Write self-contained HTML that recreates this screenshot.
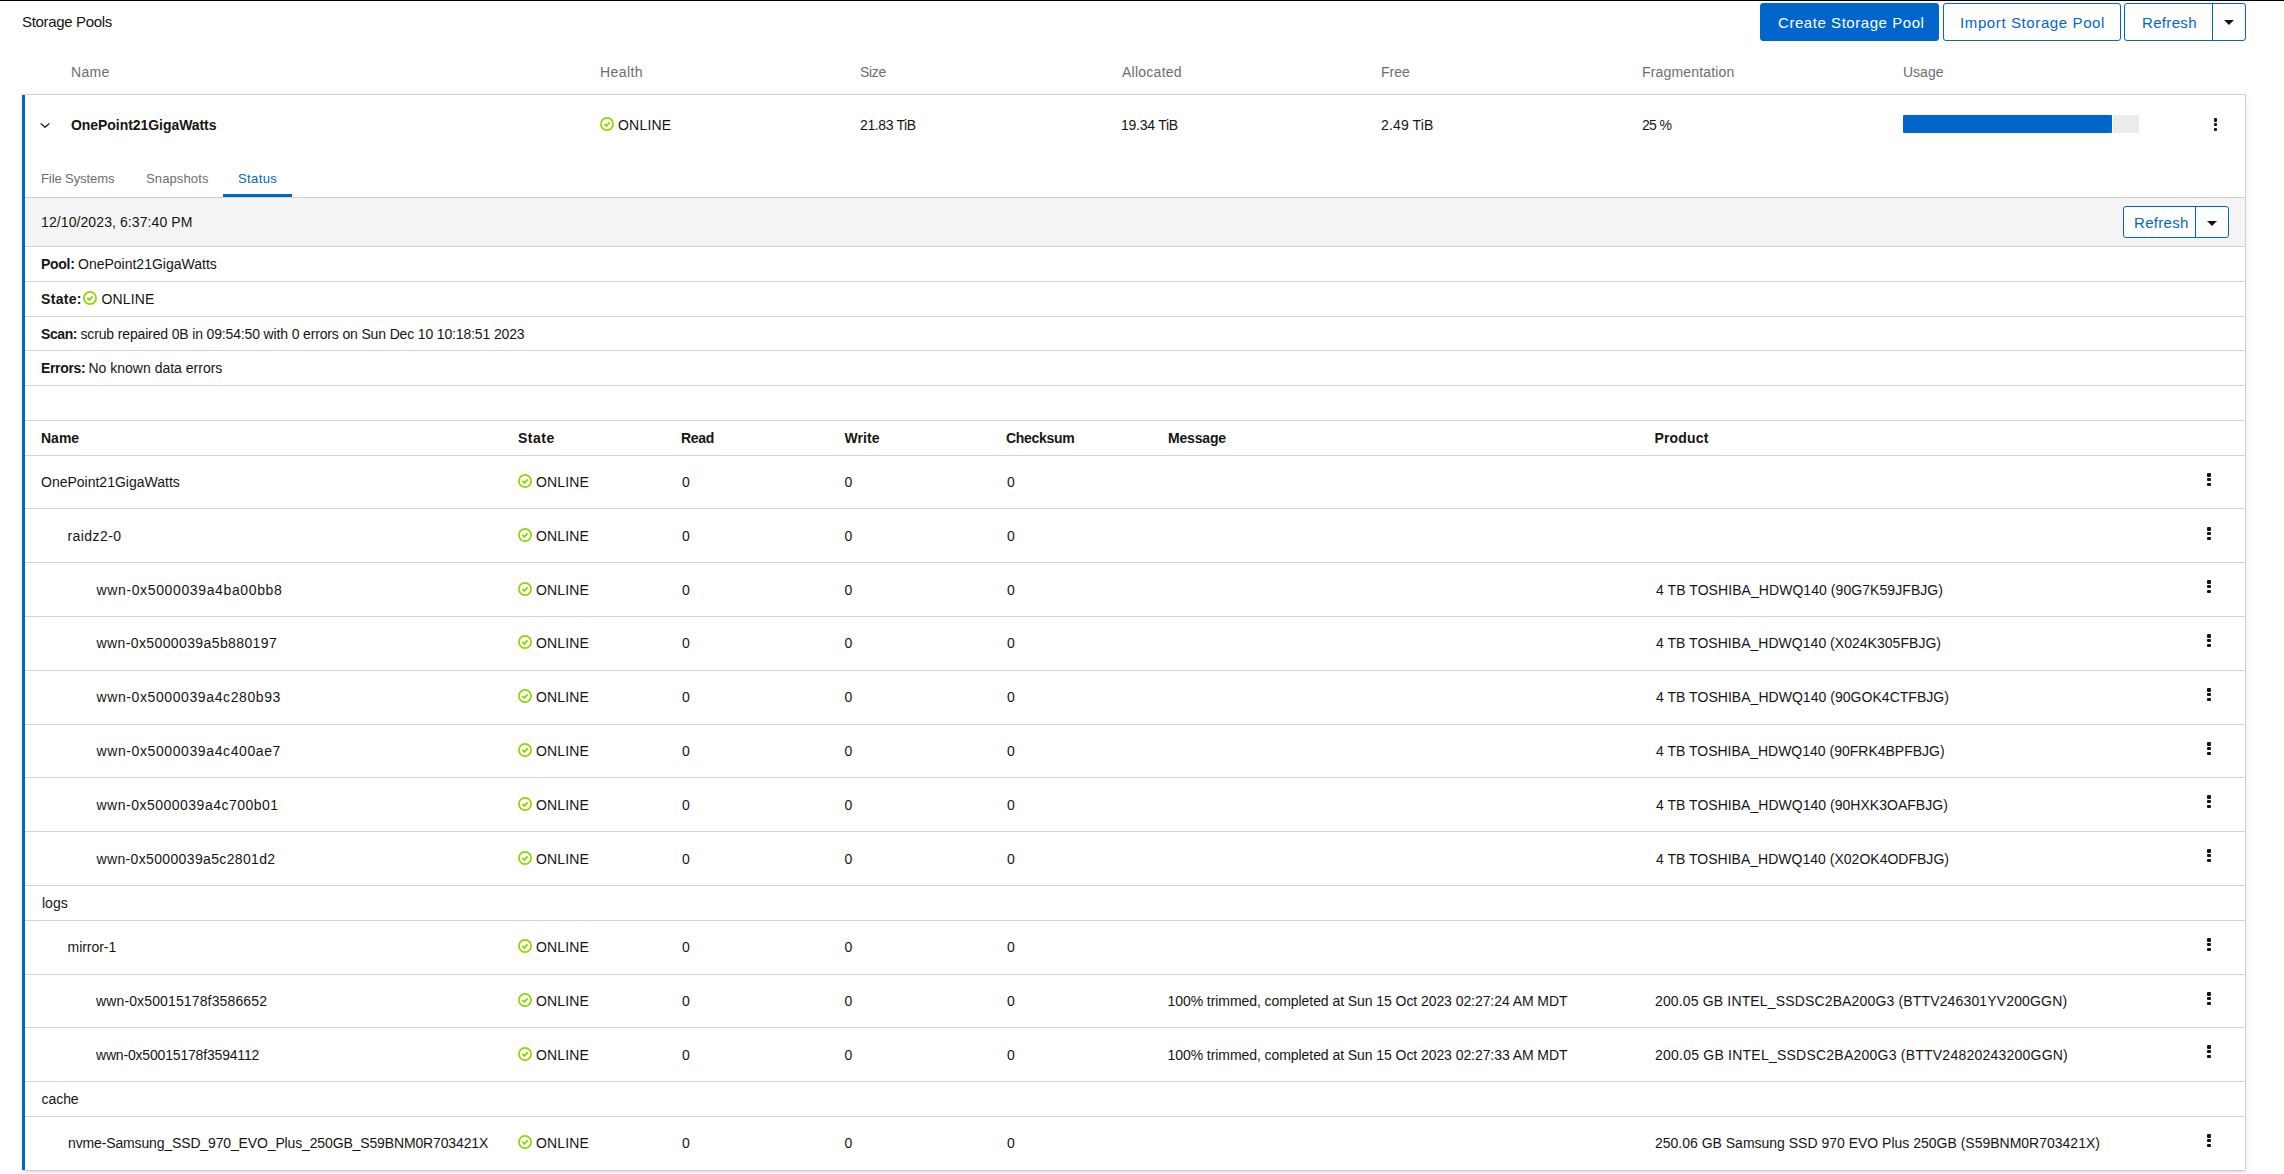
<!DOCTYPE html>
<html><head><meta charset="utf-8"><title>Storage Pools</title>
<style>
html,body{margin:0;padding:0;background:#fff;}
body{width:2284px;height:1174px;position:relative;overflow:hidden;font-family:"Liberation Sans",sans-serif;color:#151515;}
.t{position:absolute;white-space:pre;}
.r{position:absolute;}
.ck{display:block;}
.dot{position:absolute;left:0;background:#151515;border-radius:1px;}
.btn{position:absolute;box-sizing:border-box;border:1px solid #0066cc;border-radius:3px;background:#fff;}
.btn.primary{background:#0066cc;}
.card{position:absolute;background:#fff;box-shadow:0 2px 2px -1px rgba(3,3,3,0.22),0 4px 8px 0 rgba(3,3,3,0.07);}
</style></head><body>
<div class="r" style="left:0px;top:0px;width:2284px;height:1px;background:#000;"></div>
<div id="t1" class="t" style="left:22.00px;top:14.00px;font-size:15px;line-height:15px;font-weight:400;color:#151515;letter-spacing:-0.333px;">Storage Pools</div>
<div class="btn primary" style="left:1760px;top:3px;width:179px;height:38px"></div>
<div id="t2" class="t" style="left:1778.00px;top:15.00px;font-size:15px;line-height:15px;font-weight:400;color:#fff;letter-spacing:0.556px;">Create Storage Pool</div>
<div class="btn" style="left:1943px;top:3px;width:178px;height:38px"></div>
<div id="t3" class="t" style="left:1960.00px;top:15.00px;font-size:15px;line-height:15px;font-weight:400;color:#0066cc;letter-spacing:0.611px;">Import Storage Pool</div>
<div class="btn" style="left:2124px;top:3px;width:122px;height:38px"></div>
<div class="r" style="left:2212px;top:3px;width:1px;height:38px;background:#0066cc;"></div>
<div id="t4" class="t" style="left:2142.00px;top:15.00px;font-size:15px;line-height:15px;font-weight:400;color:#0066cc;letter-spacing:0.333px;">Refresh</div>
<svg class="r" style="left:2224.3px;top:20px" width="10" height="5" viewBox="0 0 10 5"><path d="M0 0 L10 0 L5 5 Z" fill="#151515"/></svg>
<div id="t5" class="t" style="left:71.00px;top:65.00px;font-size:14px;line-height:14px;font-weight:400;color:#6a6e73;letter-spacing:0.333px;">Name</div>
<div id="t6" class="t" style="left:600.00px;top:65.00px;font-size:14px;line-height:14px;font-weight:400;color:#6a6e73;letter-spacing:0.400px;">Health</div>
<div id="t7" class="t" style="left:860.00px;top:65.00px;font-size:14px;line-height:14px;font-weight:400;color:#6a6e73;letter-spacing:-0.333px;">Size</div>
<div id="t8" class="t" style="left:1122.00px;top:65.00px;font-size:14px;line-height:14px;font-weight:400;color:#6a6e73;letter-spacing:0.250px;">Allocated</div>
<div id="t9" class="t" style="left:1381.00px;top:65.00px;font-size:14px;line-height:14px;font-weight:400;color:#6a6e73;">Free</div>
<div id="t10" class="t" style="left:1642.00px;top:65.00px;font-size:14px;line-height:14px;font-weight:400;color:#6a6e73;letter-spacing:0.167px;">Fragmentation</div>
<div id="t11" class="t" style="left:1903.00px;top:65.00px;font-size:14px;line-height:14px;font-weight:400;color:#6a6e73;">Usage</div>
<div class="card" style="left:22px;top:94px;width:2224px;height:1076px"></div>
<div class="r" style="left:22px;top:94px;width:2224px;height:1px;background:#d2d2d2;"></div>
<div class="r" style="left:2245px;top:94px;width:1px;height:1076px;background:#d2d2d2;"></div>
<div class="r" style="left:22px;top:95px;width:3px;height:1075px;background:#0066cc;"></div>
<svg class="r" style="left:40px;top:122px" width="10" height="6" viewBox="0 0 10 6"><path d="M0.6 1.35 L5.05 5.3 L9.5 1.35" fill="none" stroke="#151515" stroke-width="1.25"/></svg>
<div id="t12" class="t" style="left:71.00px;top:118.00px;font-size:14px;line-height:14px;font-weight:700;color:#151515;letter-spacing:-0.056px;">OnePoint21GigaWatts</div>
<div class="r" style="left:600px;top:117px;width:14px;height:14px"><svg class="ck" width="14" height="14" viewBox="0 0 14 14"><circle cx="7" cy="7" r="6.1" fill="none" stroke="#92d400" stroke-width="1.7"/><path d="M4.3 6.9 L6.3 8.9 L9.7 5.4" fill="none" stroke="#92d400" stroke-width="1.9" stroke-linecap="butt"/></svg></div>
<div id="t13" class="t" style="left:618.00px;top:118.00px;font-size:14px;line-height:14px;font-weight:400;color:#151515;letter-spacing:0.200px;">ONLINE</div>
<div id="t14" class="t" style="left:860.00px;top:118.00px;font-size:14px;line-height:14px;font-weight:400;color:#151515;letter-spacing:-0.375px;">21.83 TiB</div>
<div id="t15" class="t" style="left:1121.00px;top:118.00px;font-size:14px;line-height:14px;font-weight:400;color:#151515;letter-spacing:-0.250px;">19.34 TiB</div>
<div id="t16" class="t" style="left:1381.00px;top:118.00px;font-size:14px;line-height:14px;font-weight:400;color:#151515;letter-spacing:0.143px;">2.49 TiB</div>
<div id="t17" class="t" style="left:1642.00px;top:118.00px;font-size:14px;line-height:14px;font-weight:400;color:#151515;letter-spacing:-0.667px;">25 %</div>
<div class="r" style="left:1903px;top:115px;width:209px;height:18px;background:#0066cc;border-radius:1px"></div>
<div class="r" style="left:2113px;top:115px;width:26px;height:18px;background:#ececec;border-radius:1px"></div>
<div class="r" style="left:2214px;top:118px;width:3px;height:13px"><div class="dot" style="top:0;height:4px;width:3px"></div><div class="dot" style="top:5px;height:3px;width:3px"></div><div class="dot" style="top:10px;height:3px;width:3px"></div></div>
<div id="t18" class="t" style="left:41.00px;top:172.00px;font-size:13px;line-height:13px;font-weight:400;color:#6a6e73;letter-spacing:-0.091px;">File Systems</div>
<div id="t19" class="t" style="left:146.00px;top:172.00px;font-size:13px;line-height:13px;font-weight:400;color:#6a6e73;letter-spacing:0.125px;">Snapshots</div>
<div id="t20" class="t" style="left:238.00px;top:172.00px;font-size:13px;line-height:13px;font-weight:400;color:#0066cc;letter-spacing:0.400px;">Status</div>
<div class="r" style="left:25px;top:197px;width:2220px;height:1px;background:#d2d2d2;"></div>
<div class="r" style="left:223px;top:194px;width:69px;height:3px;background:#0066cc;"></div>
<div class="r" style="left:25px;top:198px;width:2220px;height:48px;background:#f4f4f4;"></div>
<div class="r" style="left:25px;top:246px;width:2220px;height:1px;background:#d2d2d2;"></div>
<div id="t21" class="t" style="left:41.00px;top:215.00px;font-size:14px;line-height:14px;font-weight:400;color:#151515;letter-spacing:0.095px;">12/10/2023, 6:37:40 PM</div>
<div class="btn" style="left:2123px;top:206px;width:106px;height:32px;background:#fff"></div>
<div class="r" style="left:2195px;top:206px;width:1px;height:32px;background:#0066cc;"></div>
<div id="t22" class="t" style="left:2134.00px;top:215.00px;font-size:15px;line-height:15px;font-weight:400;color:#0066cc;letter-spacing:0.300px;">Refresh</div>
<svg class="r" style="left:2207px;top:221px" width="10" height="5" viewBox="0 0 10 5"><path d="M0 0 L10 0 L5 5 Z" fill="#151515"/></svg>
<div id="t23" class="t" style="left:41.00px;top:257.00px;font-size:14px;line-height:14px;font-weight:700;color:#151515;letter-spacing:-0.300px;">Pool:</div>
<div id="t24" class="t" style="left:78.00px;top:257.00px;font-size:14px;line-height:14px;font-weight:400;color:#151515;">OnePoint21GigaWatts</div>
<div class="r" style="left:25px;top:281px;width:2220px;height:1px;background:#d2d2d2;"></div>
<div id="t25" class="t" style="left:41.00px;top:292.00px;font-size:14px;line-height:14px;font-weight:700;color:#151515;letter-spacing:0.320px;">State:</div>
<div class="r" style="left:83px;top:291px;width:14px;height:14px"><svg class="ck" width="14" height="14" viewBox="0 0 14 14"><circle cx="7" cy="7" r="6.1" fill="none" stroke="#92d400" stroke-width="1.7"/><path d="M4.3 6.9 L6.3 8.9 L9.7 5.4" fill="none" stroke="#92d400" stroke-width="1.9" stroke-linecap="butt"/></svg></div>
<div id="t26" class="t" style="left:101.50px;top:292.00px;font-size:14px;line-height:14px;font-weight:400;color:#151515;letter-spacing:0.160px;">ONLINE</div>
<div class="r" style="left:25px;top:316px;width:2220px;height:1px;background:#d2d2d2;"></div>
<div id="t27" class="t" style="left:41.00px;top:327.00px;font-size:14px;line-height:14px;font-weight:700;color:#151515;letter-spacing:-0.400px;">Scan:</div>
<div id="t28" class="t" style="left:80.50px;top:327.00px;font-size:14px;line-height:14px;font-weight:400;color:#151515;letter-spacing:-0.149px;">scrub repaired 0B in 09:54:50 with 0 errors on Sun Dec 10 10:18:51 2023</div>
<div class="r" style="left:25px;top:350px;width:2220px;height:1px;background:#d2d2d2;"></div>
<div id="t29" class="t" style="left:41.00px;top:361.00px;font-size:14px;line-height:14px;font-weight:700;color:#151515;letter-spacing:-0.333px;">Errors:</div>
<div id="t30" class="t" style="left:88.50px;top:361.00px;font-size:14px;line-height:14px;font-weight:400;color:#151515;">No known data errors</div>
<div class="r" style="left:25px;top:385px;width:2220px;height:1px;background:#d2d2d2;"></div>
<div class="r" style="left:25px;top:420px;width:2220px;height:1px;background:#d2d2d2;"></div>
<div id="t31" class="t" style="left:41.00px;top:431.00px;font-size:14px;line-height:14px;font-weight:700;color:#151515;">Name</div>
<div id="t32" class="t" style="left:518.00px;top:431.00px;font-size:14px;line-height:14px;font-weight:700;color:#151515;letter-spacing:0.500px;">State</div>
<div id="t33" class="t" style="left:681.00px;top:431.00px;font-size:14px;line-height:14px;font-weight:700;color:#151515;letter-spacing:-0.333px;">Read</div>
<div id="t34" class="t" style="left:844.50px;top:431.00px;font-size:14px;line-height:14px;font-weight:700;color:#151515;letter-spacing:0.050px;">Write</div>
<div id="t35" class="t" style="left:1006.00px;top:431.00px;font-size:14px;line-height:14px;font-weight:700;color:#151515;letter-spacing:-0.314px;">Checksum</div>
<div id="t36" class="t" style="left:1168.00px;top:431.00px;font-size:14px;line-height:14px;font-weight:700;color:#151515;letter-spacing:-0.167px;">Message</div>
<div id="t37" class="t" style="left:1654.50px;top:431.00px;font-size:14px;line-height:14px;font-weight:700;color:#151515;letter-spacing:0.167px;">Product</div>
<div class="r" style="left:25px;top:455px;width:2220px;height:1px;background:#d2d2d2;"></div>
<div id="t38" class="t" style="left:41.00px;top:475.00px;font-size:14px;line-height:14px;font-weight:400;color:#151515;">OnePoint21GigaWatts</div>
<div class="r" style="left:518px;top:474px;width:14px;height:14px"><svg class="ck" width="14" height="14" viewBox="0 0 14 14"><circle cx="7" cy="7" r="6.1" fill="none" stroke="#92d400" stroke-width="1.7"/><path d="M4.3 6.9 L6.3 8.9 L9.7 5.4" fill="none" stroke="#92d400" stroke-width="1.9" stroke-linecap="butt"/></svg></div>
<div id="t39" class="t" style="left:536.00px;top:475.00px;font-size:14px;line-height:14px;font-weight:400;color:#151515;letter-spacing:0.160px;">ONLINE</div>
<div id="t40" class="t" style="left:682.00px;top:475.00px;font-size:14px;line-height:14px;font-weight:400;color:#151515;">0</div>
<div id="t41" class="t" style="left:844.50px;top:475.00px;font-size:14px;line-height:14px;font-weight:400;color:#151515;">0</div>
<div id="t42" class="t" style="left:1007.00px;top:475.00px;font-size:14px;line-height:14px;font-weight:400;color:#151515;">0</div>
<div class="r" style="left:2207px;top:473px;width:4px;height:13px"><div class="dot" style="top:0;height:4px;width:4px"></div><div class="dot" style="top:5px;height:3px;width:4px"></div><div class="dot" style="top:10px;height:3px;width:4px"></div></div>
<div class="r" style="left:25px;top:508px;width:2220px;height:1px;background:#d2d2d2;"></div>
<div id="t43" class="t" style="left:67.50px;top:529.00px;font-size:14px;line-height:14px;font-weight:400;color:#151515;letter-spacing:0.429px;">raidz2-0</div>
<div class="r" style="left:518px;top:528px;width:14px;height:14px"><svg class="ck" width="14" height="14" viewBox="0 0 14 14"><circle cx="7" cy="7" r="6.1" fill="none" stroke="#92d400" stroke-width="1.7"/><path d="M4.3 6.9 L6.3 8.9 L9.7 5.4" fill="none" stroke="#92d400" stroke-width="1.9" stroke-linecap="butt"/></svg></div>
<div id="t44" class="t" style="left:536.00px;top:529.00px;font-size:14px;line-height:14px;font-weight:400;color:#151515;letter-spacing:0.160px;">ONLINE</div>
<div id="t45" class="t" style="left:682.00px;top:529.00px;font-size:14px;line-height:14px;font-weight:400;color:#151515;">0</div>
<div id="t46" class="t" style="left:844.50px;top:529.00px;font-size:14px;line-height:14px;font-weight:400;color:#151515;">0</div>
<div id="t47" class="t" style="left:1007.00px;top:529.00px;font-size:14px;line-height:14px;font-weight:400;color:#151515;">0</div>
<div class="r" style="left:2207px;top:527px;width:4px;height:13px"><div class="dot" style="top:0;height:4px;width:4px"></div><div class="dot" style="top:5px;height:3px;width:4px"></div><div class="dot" style="top:10px;height:3px;width:4px"></div></div>
<div class="r" style="left:25px;top:562px;width:2220px;height:1px;background:#d2d2d2;"></div>
<div id="t48" class="t" style="left:96.50px;top:583.00px;font-size:14px;line-height:14px;font-weight:400;color:#151515;letter-spacing:0.629px;">wwn-0x5000039a4ba00bb8</div>
<div class="r" style="left:518px;top:582px;width:14px;height:14px"><svg class="ck" width="14" height="14" viewBox="0 0 14 14"><circle cx="7" cy="7" r="6.1" fill="none" stroke="#92d400" stroke-width="1.7"/><path d="M4.3 6.9 L6.3 8.9 L9.7 5.4" fill="none" stroke="#92d400" stroke-width="1.9" stroke-linecap="butt"/></svg></div>
<div id="t49" class="t" style="left:536.00px;top:583.00px;font-size:14px;line-height:14px;font-weight:400;color:#151515;letter-spacing:0.160px;">ONLINE</div>
<div id="t50" class="t" style="left:682.00px;top:583.00px;font-size:14px;line-height:14px;font-weight:400;color:#151515;">0</div>
<div id="t51" class="t" style="left:844.50px;top:583.00px;font-size:14px;line-height:14px;font-weight:400;color:#151515;">0</div>
<div id="t52" class="t" style="left:1007.00px;top:583.00px;font-size:14px;line-height:14px;font-weight:400;color:#151515;">0</div>
<div class="r" style="left:2207px;top:580px;width:4px;height:13px"><div class="dot" style="top:0;height:4px;width:4px"></div><div class="dot" style="top:5px;height:3px;width:4px"></div><div class="dot" style="top:10px;height:3px;width:4px"></div></div>
<div id="t53" class="t" style="left:1656.00px;top:583.00px;font-size:14px;line-height:14px;font-weight:400;color:#151515;letter-spacing:0.065px;">4 TB TOSHIBA_HDWQ140 (90G7K59JFBJG)</div>
<div class="r" style="left:25px;top:616px;width:2220px;height:1px;background:#d2d2d2;"></div>
<div id="t54" class="t" style="left:96.50px;top:636.00px;font-size:14px;line-height:14px;font-weight:400;color:#151515;letter-spacing:0.390px;">wwn-0x5000039a5b880197</div>
<div class="r" style="left:518px;top:635px;width:14px;height:14px"><svg class="ck" width="14" height="14" viewBox="0 0 14 14"><circle cx="7" cy="7" r="6.1" fill="none" stroke="#92d400" stroke-width="1.7"/><path d="M4.3 6.9 L6.3 8.9 L9.7 5.4" fill="none" stroke="#92d400" stroke-width="1.9" stroke-linecap="butt"/></svg></div>
<div id="t55" class="t" style="left:536.00px;top:636.00px;font-size:14px;line-height:14px;font-weight:400;color:#151515;letter-spacing:0.160px;">ONLINE</div>
<div id="t56" class="t" style="left:682.00px;top:636.00px;font-size:14px;line-height:14px;font-weight:400;color:#151515;">0</div>
<div id="t57" class="t" style="left:844.50px;top:636.00px;font-size:14px;line-height:14px;font-weight:400;color:#151515;">0</div>
<div id="t58" class="t" style="left:1007.00px;top:636.00px;font-size:14px;line-height:14px;font-weight:400;color:#151515;">0</div>
<div class="r" style="left:2207px;top:634px;width:4px;height:13px"><div class="dot" style="top:0;height:4px;width:4px"></div><div class="dot" style="top:5px;height:3px;width:4px"></div><div class="dot" style="top:10px;height:3px;width:4px"></div></div>
<div id="t59" class="t" style="left:1656.00px;top:636.00px;font-size:14px;line-height:14px;font-weight:400;color:#151515;letter-spacing:0.029px;">4 TB TOSHIBA_HDWQ140 (X024K305FBJG)</div>
<div class="r" style="left:25px;top:670px;width:2220px;height:1px;background:#d2d2d2;"></div>
<div id="t60" class="t" style="left:96.50px;top:690.00px;font-size:14px;line-height:14px;font-weight:400;color:#151515;letter-spacing:0.600px;">wwn-0x5000039a4c280b93</div>
<div class="r" style="left:518px;top:689px;width:14px;height:14px"><svg class="ck" width="14" height="14" viewBox="0 0 14 14"><circle cx="7" cy="7" r="6.1" fill="none" stroke="#92d400" stroke-width="1.7"/><path d="M4.3 6.9 L6.3 8.9 L9.7 5.4" fill="none" stroke="#92d400" stroke-width="1.9" stroke-linecap="butt"/></svg></div>
<div id="t61" class="t" style="left:536.00px;top:690.00px;font-size:14px;line-height:14px;font-weight:400;color:#151515;letter-spacing:0.160px;">ONLINE</div>
<div id="t62" class="t" style="left:682.00px;top:690.00px;font-size:14px;line-height:14px;font-weight:400;color:#151515;">0</div>
<div id="t63" class="t" style="left:844.50px;top:690.00px;font-size:14px;line-height:14px;font-weight:400;color:#151515;">0</div>
<div id="t64" class="t" style="left:1007.00px;top:690.00px;font-size:14px;line-height:14px;font-weight:400;color:#151515;">0</div>
<div class="r" style="left:2207px;top:688px;width:4px;height:13px"><div class="dot" style="top:0;height:4px;width:4px"></div><div class="dot" style="top:5px;height:3px;width:4px"></div><div class="dot" style="top:10px;height:3px;width:4px"></div></div>
<div id="t65" class="t" style="left:1656.00px;top:690.00px;font-size:14px;line-height:14px;font-weight:400;color:#151515;letter-spacing:0.035px;">4 TB TOSHIBA_HDWQ140 (90GOK4CTFBJG)</div>
<div class="r" style="left:25px;top:724px;width:2220px;height:1px;background:#d2d2d2;"></div>
<div id="t66" class="t" style="left:96.50px;top:744.00px;font-size:14px;line-height:14px;font-weight:400;color:#151515;letter-spacing:0.600px;">wwn-0x5000039a4c400ae7</div>
<div class="r" style="left:518px;top:743px;width:14px;height:14px"><svg class="ck" width="14" height="14" viewBox="0 0 14 14"><circle cx="7" cy="7" r="6.1" fill="none" stroke="#92d400" stroke-width="1.7"/><path d="M4.3 6.9 L6.3 8.9 L9.7 5.4" fill="none" stroke="#92d400" stroke-width="1.9" stroke-linecap="butt"/></svg></div>
<div id="t67" class="t" style="left:536.00px;top:744.00px;font-size:14px;line-height:14px;font-weight:400;color:#151515;letter-spacing:0.160px;">ONLINE</div>
<div id="t68" class="t" style="left:682.00px;top:744.00px;font-size:14px;line-height:14px;font-weight:400;color:#151515;">0</div>
<div id="t69" class="t" style="left:844.50px;top:744.00px;font-size:14px;line-height:14px;font-weight:400;color:#151515;">0</div>
<div id="t70" class="t" style="left:1007.00px;top:744.00px;font-size:14px;line-height:14px;font-weight:400;color:#151515;">0</div>
<div class="r" style="left:2207px;top:742px;width:4px;height:13px"><div class="dot" style="top:0;height:4px;width:4px"></div><div class="dot" style="top:5px;height:3px;width:4px"></div><div class="dot" style="top:10px;height:3px;width:4px"></div></div>
<div id="t71" class="t" style="left:1656.00px;top:744.00px;font-size:14px;line-height:14px;font-weight:400;color:#151515;">4 TB TOSHIBA_HDWQ140 (90FRK4BPFBJG)</div>
<div class="r" style="left:25px;top:777px;width:2220px;height:1px;background:#d2d2d2;"></div>
<div id="t72" class="t" style="left:96.50px;top:798.00px;font-size:14px;line-height:14px;font-weight:400;color:#151515;letter-spacing:0.495px;">wwn-0x5000039a4c700b01</div>
<div class="r" style="left:518px;top:797px;width:14px;height:14px"><svg class="ck" width="14" height="14" viewBox="0 0 14 14"><circle cx="7" cy="7" r="6.1" fill="none" stroke="#92d400" stroke-width="1.7"/><path d="M4.3 6.9 L6.3 8.9 L9.7 5.4" fill="none" stroke="#92d400" stroke-width="1.9" stroke-linecap="butt"/></svg></div>
<div id="t73" class="t" style="left:536.00px;top:798.00px;font-size:14px;line-height:14px;font-weight:400;color:#151515;letter-spacing:0.160px;">ONLINE</div>
<div id="t74" class="t" style="left:682.00px;top:798.00px;font-size:14px;line-height:14px;font-weight:400;color:#151515;">0</div>
<div id="t75" class="t" style="left:844.50px;top:798.00px;font-size:14px;line-height:14px;font-weight:400;color:#151515;">0</div>
<div id="t76" class="t" style="left:1007.00px;top:798.00px;font-size:14px;line-height:14px;font-weight:400;color:#151515;">0</div>
<div class="r" style="left:2207px;top:795px;width:4px;height:13px"><div class="dot" style="top:0;height:4px;width:4px"></div><div class="dot" style="top:5px;height:3px;width:4px"></div><div class="dot" style="top:10px;height:3px;width:4px"></div></div>
<div id="t77" class="t" style="left:1656.00px;top:798.00px;font-size:14px;line-height:14px;font-weight:400;color:#151515;letter-spacing:0.024px;">4 TB TOSHIBA_HDWQ140 (90HXK3OAFBJG)</div>
<div class="r" style="left:25px;top:831px;width:2220px;height:1px;background:#d2d2d2;"></div>
<div id="t78" class="t" style="left:96.50px;top:852.00px;font-size:14px;line-height:14px;font-weight:400;color:#151515;letter-spacing:0.352px;">wwn-0x5000039a5c2801d2</div>
<div class="r" style="left:518px;top:851px;width:14px;height:14px"><svg class="ck" width="14" height="14" viewBox="0 0 14 14"><circle cx="7" cy="7" r="6.1" fill="none" stroke="#92d400" stroke-width="1.7"/><path d="M4.3 6.9 L6.3 8.9 L9.7 5.4" fill="none" stroke="#92d400" stroke-width="1.9" stroke-linecap="butt"/></svg></div>
<div id="t79" class="t" style="left:536.00px;top:852.00px;font-size:14px;line-height:14px;font-weight:400;color:#151515;letter-spacing:0.160px;">ONLINE</div>
<div id="t80" class="t" style="left:682.00px;top:852.00px;font-size:14px;line-height:14px;font-weight:400;color:#151515;">0</div>
<div id="t81" class="t" style="left:844.50px;top:852.00px;font-size:14px;line-height:14px;font-weight:400;color:#151515;">0</div>
<div id="t82" class="t" style="left:1007.00px;top:852.00px;font-size:14px;line-height:14px;font-weight:400;color:#151515;">0</div>
<div class="r" style="left:2207px;top:849px;width:4px;height:13px"><div class="dot" style="top:0;height:4px;width:4px"></div><div class="dot" style="top:5px;height:3px;width:4px"></div><div class="dot" style="top:10px;height:3px;width:4px"></div></div>
<div id="t83" class="t" style="left:1656.00px;top:852.00px;font-size:14px;line-height:14px;font-weight:400;color:#151515;letter-spacing:0.012px;">4 TB TOSHIBA_HDWQ140 (X02OK4ODFBJG)</div>
<div class="r" style="left:25px;top:885px;width:2220px;height:1px;background:#d2d2d2;"></div>
<div id="t84" class="t" style="left:42.00px;top:896.00px;font-size:14px;line-height:14px;font-weight:400;color:#151515;">logs</div>
<div class="r" style="left:25px;top:920px;width:2220px;height:1px;background:#d2d2d2;"></div>
<div id="t85" class="t" style="left:67.50px;top:940.00px;font-size:14px;line-height:14px;font-weight:400;color:#151515;letter-spacing:-0.029px;">mirror-1</div>
<div class="r" style="left:518px;top:939px;width:14px;height:14px"><svg class="ck" width="14" height="14" viewBox="0 0 14 14"><circle cx="7" cy="7" r="6.1" fill="none" stroke="#92d400" stroke-width="1.7"/><path d="M4.3 6.9 L6.3 8.9 L9.7 5.4" fill="none" stroke="#92d400" stroke-width="1.9" stroke-linecap="butt"/></svg></div>
<div id="t86" class="t" style="left:536.00px;top:940.00px;font-size:14px;line-height:14px;font-weight:400;color:#151515;letter-spacing:0.160px;">ONLINE</div>
<div id="t87" class="t" style="left:682.00px;top:940.00px;font-size:14px;line-height:14px;font-weight:400;color:#151515;">0</div>
<div id="t88" class="t" style="left:844.50px;top:940.00px;font-size:14px;line-height:14px;font-weight:400;color:#151515;">0</div>
<div id="t89" class="t" style="left:1007.00px;top:940.00px;font-size:14px;line-height:14px;font-weight:400;color:#151515;">0</div>
<div class="r" style="left:2207px;top:938px;width:4px;height:13px"><div class="dot" style="top:0;height:4px;width:4px"></div><div class="dot" style="top:5px;height:3px;width:4px"></div><div class="dot" style="top:10px;height:3px;width:4px"></div></div>
<div class="r" style="left:25px;top:974px;width:2220px;height:1px;background:#d2d2d2;"></div>
<div id="t90" class="t" style="left:96.00px;top:994.00px;font-size:14px;line-height:14px;font-weight:400;color:#151515;letter-spacing:0.133px;">wwn-0x50015178f3586652</div>
<div class="r" style="left:518px;top:993px;width:14px;height:14px"><svg class="ck" width="14" height="14" viewBox="0 0 14 14"><circle cx="7" cy="7" r="6.1" fill="none" stroke="#92d400" stroke-width="1.7"/><path d="M4.3 6.9 L6.3 8.9 L9.7 5.4" fill="none" stroke="#92d400" stroke-width="1.9" stroke-linecap="butt"/></svg></div>
<div id="t91" class="t" style="left:536.00px;top:994.00px;font-size:14px;line-height:14px;font-weight:400;color:#151515;letter-spacing:0.160px;">ONLINE</div>
<div id="t92" class="t" style="left:682.00px;top:994.00px;font-size:14px;line-height:14px;font-weight:400;color:#151515;">0</div>
<div id="t93" class="t" style="left:844.50px;top:994.00px;font-size:14px;line-height:14px;font-weight:400;color:#151515;">0</div>
<div id="t94" class="t" style="left:1007.00px;top:994.00px;font-size:14px;line-height:14px;font-weight:400;color:#151515;">0</div>
<div class="r" style="left:2207px;top:992px;width:4px;height:13px"><div class="dot" style="top:0;height:4px;width:4px"></div><div class="dot" style="top:5px;height:3px;width:4px"></div><div class="dot" style="top:10px;height:3px;width:4px"></div></div>
<div id="t95" class="t" style="left:1167.50px;top:994.00px;font-size:14px;line-height:14px;font-weight:400;color:#151515;letter-spacing:-0.067px;">100% trimmed, completed at Sun 15 Oct 2023 02:27:24 AM MDT</div>
<div id="t96" class="t" style="left:1655.00px;top:994.00px;font-size:14px;line-height:14px;font-weight:400;color:#151515;letter-spacing:0.151px;">200.05 GB INTEL_SSDSC2BA200G3 (BTTV246301YV200GGN)</div>
<div class="r" style="left:25px;top:1027px;width:2220px;height:1px;background:#d2d2d2;"></div>
<div id="t97" class="t" style="left:96.00px;top:1048.00px;font-size:14px;line-height:14px;font-weight:400;color:#151515;letter-spacing:-0.181px;">wwn-0x50015178f3594112</div>
<div class="r" style="left:518px;top:1047px;width:14px;height:14px"><svg class="ck" width="14" height="14" viewBox="0 0 14 14"><circle cx="7" cy="7" r="6.1" fill="none" stroke="#92d400" stroke-width="1.7"/><path d="M4.3 6.9 L6.3 8.9 L9.7 5.4" fill="none" stroke="#92d400" stroke-width="1.9" stroke-linecap="butt"/></svg></div>
<div id="t98" class="t" style="left:536.00px;top:1048.00px;font-size:14px;line-height:14px;font-weight:400;color:#151515;letter-spacing:0.160px;">ONLINE</div>
<div id="t99" class="t" style="left:682.00px;top:1048.00px;font-size:14px;line-height:14px;font-weight:400;color:#151515;">0</div>
<div id="t100" class="t" style="left:844.50px;top:1048.00px;font-size:14px;line-height:14px;font-weight:400;color:#151515;">0</div>
<div id="t101" class="t" style="left:1007.00px;top:1048.00px;font-size:14px;line-height:14px;font-weight:400;color:#151515;">0</div>
<div class="r" style="left:2207px;top:1045px;width:4px;height:13px"><div class="dot" style="top:0;height:4px;width:4px"></div><div class="dot" style="top:5px;height:3px;width:4px"></div><div class="dot" style="top:10px;height:3px;width:4px"></div></div>
<div id="t102" class="t" style="left:1167.50px;top:1048.00px;font-size:14px;line-height:14px;font-weight:400;color:#151515;letter-spacing:-0.067px;">100% trimmed, completed at Sun 15 Oct 2023 02:27:33 AM MDT</div>
<div id="t103" class="t" style="left:1655.00px;top:1048.00px;font-size:14px;line-height:14px;font-weight:400;color:#151515;letter-spacing:0.229px;">200.05 GB INTEL_SSDSC2BA200G3 (BTTV24820243200GGN)</div>
<div class="r" style="left:25px;top:1081px;width:2220px;height:1px;background:#d2d2d2;"></div>
<div id="t104" class="t" style="left:41.50px;top:1092.00px;font-size:14px;line-height:14px;font-weight:400;color:#151515;letter-spacing:-0.050px;">cache</div>
<div class="r" style="left:25px;top:1116px;width:2220px;height:1px;background:#d2d2d2;"></div>
<div id="t105" class="t" style="left:68.00px;top:1136.00px;font-size:14px;line-height:14px;font-weight:400;color:#151515;letter-spacing:-0.140px;">nvme-Samsung_SSD_970_EVO_Plus_250GB_S59BNM0R703421X</div>
<div class="r" style="left:518px;top:1135px;width:14px;height:14px"><svg class="ck" width="14" height="14" viewBox="0 0 14 14"><circle cx="7" cy="7" r="6.1" fill="none" stroke="#92d400" stroke-width="1.7"/><path d="M4.3 6.9 L6.3 8.9 L9.7 5.4" fill="none" stroke="#92d400" stroke-width="1.9" stroke-linecap="butt"/></svg></div>
<div id="t106" class="t" style="left:536.00px;top:1136.00px;font-size:14px;line-height:14px;font-weight:400;color:#151515;letter-spacing:0.160px;">ONLINE</div>
<div id="t107" class="t" style="left:682.00px;top:1136.00px;font-size:14px;line-height:14px;font-weight:400;color:#151515;">0</div>
<div id="t108" class="t" style="left:844.50px;top:1136.00px;font-size:14px;line-height:14px;font-weight:400;color:#151515;">0</div>
<div id="t109" class="t" style="left:1007.00px;top:1136.00px;font-size:14px;line-height:14px;font-weight:400;color:#151515;">0</div>
<div class="r" style="left:2207px;top:1134px;width:4px;height:13px"><div class="dot" style="top:0;height:4px;width:4px"></div><div class="dot" style="top:5px;height:3px;width:4px"></div><div class="dot" style="top:10px;height:3px;width:4px"></div></div>
<div id="t110" class="t" style="left:1655.00px;top:1136.00px;font-size:14px;line-height:14px;font-weight:400;color:#151515;letter-spacing:-0.004px;">250.06 GB Samsung SSD 970 EVO Plus 250GB (S59BNM0R703421X)</div>
</body></html>
